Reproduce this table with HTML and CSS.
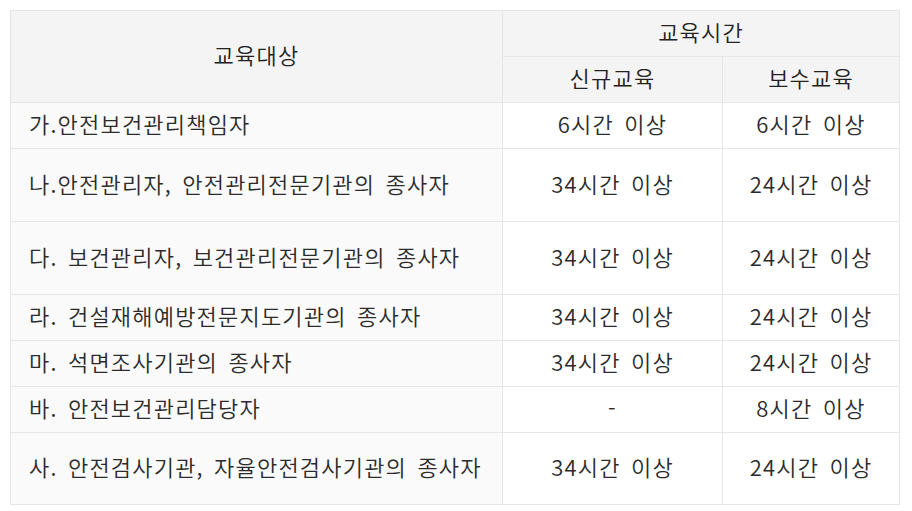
FILE: index.html
```html
<!DOCTYPE html>
<html lang="ko">
<head>
<meta charset="utf-8">
<link rel="stylesheet" href="styles.css">
</head>
<body>
<table class="edu">
  <colgroup>
    <col class="c1"><col class="c2"><col class="c3">
  </colgroup>
  <thead>
    <tr class="h1"><th rowspan="2">교육대상</th><th colspan="2">교육시간</th></tr>
    <tr class="h2"><th>신규교육</th><th>보수교육</th></tr>
  </thead>
  <tbody>
    <tr class="r46"><td class="name">가.안전보건관리책임자</td><td>6시간 이상</td><td>6시간 이상</td></tr>
    <tr class="r73"><td class="name">나.안전관리자, 안전관리전문기관의 종사자</td><td>34시간 이상</td><td>24시간 이상</td></tr>
    <tr class="r73"><td class="name">다. 보건관리자, 보건관리전문기관의 종사자</td><td>34시간 이상</td><td>24시간 이상</td></tr>
    <tr class="r46"><td class="name">라. 건설재해예방전문지도기관의 종사자</td><td>34시간 이상</td><td>24시간 이상</td></tr>
    <tr class="r46"><td class="name">마. 석면조사기관의 종사자</td><td>34시간 이상</td><td>24시간 이상</td></tr>
    <tr class="r46"><td class="name">바. 안전보건관리담당자</td><td>-</td><td>8시간 이상</td></tr>
    <tr class="r72"><td class="name">사. 안전검사기관, 자율안전검사기관의 종사자</td><td>34시간 이상</td><td>24시간 이상</td></tr>
  </tbody>
</table>
</body>
</html>
```
FILE: styles.css
```css
html, body { margin: 0; padding: 0; background: #fff; }
body { padding: 10px 0 0 10px; }
.edu {
  border-collapse: collapse;
  table-layout: fixed;
  width: 889px;
  font-family: "Noto Sans CJK KR", "Noto Sans", sans-serif;
  font-size: 22px;
  font-weight: 350;
  letter-spacing: 1.2px;
  word-spacing: 3px;
  color: #2b2b2b;
  border: 1px solid #e6e6e6;
}
.c1 { width: 492px; }
.c2 { width: 220px; }
.c3 { width: 177px; }
.edu th, .edu td {
  border: 1px solid #e6e6e6;
  padding: 0 0 5px 0;
  text-align: center;
  font-weight: 350;
  line-height: 1;
}
.edu th { background: #f4f4f4; color: #222; }
.h1 th, .h2 th { height: 40px; }
.edu td.name { text-align: left; padding-left: 18px; background: #fafafa; }
.r46 td { height: 40px; }
.r73 td { height: 67px; }
.r72 td { height: 66px; }
```
